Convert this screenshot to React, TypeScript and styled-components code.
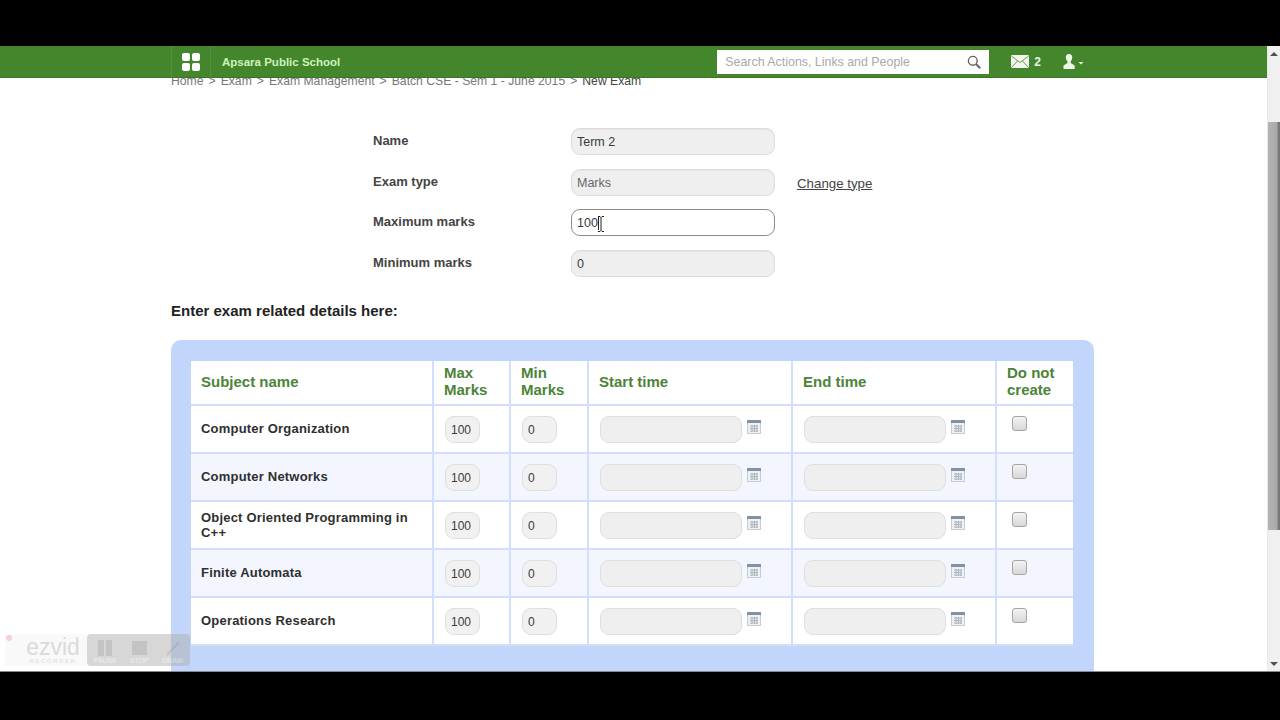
import React from 'react';
import styled, { createGlobalStyle } from 'styled-components';

const GlobalStyle = createGlobalStyle`
  html, body {
    margin: 0;
    padding: 0;
    height: 720px;
    overflow: hidden;
    background: #000;
    font-family: "Liberation Sans", Arial, sans-serif;
  }
`;

const Screen = styled.div`
  width: 1280px;
  height: 720px;
  padding: 46px 0 48px;
  box-sizing: border-box;
  background: #000;
`;

const Viewport = styled.div`
  position: relative;
  display: flex;
  height: 100%;
  background: #fff;
  overflow: hidden;
  border-bottom: 1px solid #888;
  box-sizing: border-box;
`;

const Page = styled.div`
  flex: 1;
  min-width: 0;
  display: flex;
  flex-direction: column;
`;

const Header = styled.header`
  position: relative;
  z-index: 2;
  flex: none;
  height: 32px;
  display: flex;
  align-items: center;
  padding-left: 171px;
  background: #44862b;
  border-bottom: 1px solid #3a7425;
  box-sizing: border-box;
`;

const AppsButton = styled.div`
  width: 40px;
  height: 32px;
  display: flex;
  align-items: center;
  justify-content: center;
  border-left: 1px solid #50933a;
  border-right: 1px solid #50933a;
  box-sizing: border-box;
`;

const SchoolName = styled.div`
  margin-left: 11px;
  font-size: 11.5px;
  font-weight: 700;
  color: #cdf2bd;
`;

const HeaderRight = styled.div`
  margin-left: auto;
  display: flex;
  align-items: center;
  padding-right: 183px;
`;

const SearchBox = styled.div`
  width: 272px;
  height: 24px;
  display: flex;
  align-items: center;
  justify-content: space-between;
  padding: 0 8px;
  box-sizing: border-box;
  background: #fff;
  font-size: 12.4px;
  color: #aaa7ad;
`;

const MailGroup = styled.div`
  display: flex;
  align-items: center;
  gap: 5px;
  margin-left: 22px;
  font-size: 12px;
  font-weight: 700;
  color: #e8f5e0;
`;

const UserGroup = styled.div`
  display: flex;
  align-items: center;
  margin-left: 21px;
`;

const Breadcrumb = styled.nav`
  flex: none;
  display: flex;
  gap: 5px;
  margin-top: -4px;
  padding-left: 171px;
  height: 14px;
  line-height: 14px;
  font-size: 12.2px;
  color: #777;
`;

const CurrentCrumb = styled.span`
  color: #444;
`;

const ExamForm = styled.div`
  display: grid;
  grid-template-columns: 198px 204px auto;
  grid-auto-rows: 27px;
  row-gap: 13.5px;
  align-items: center;
  margin: 40px 0 0 373px;
`;

const FieldLabel = styled.label`
  margin-top: -2px;
  font-size: 13px;
  font-weight: 700;
  color: #444;
`;

const TextField = styled.div<{ $active?: boolean; $muted?: boolean }>`
  height: 27px;
  display: flex;
  align-items: center;
  padding: 1px 5px 0;
  box-sizing: border-box;
  border-radius: 9px;
  border: 1px solid ${p => (p.$active ? '#8d8d85' : '#dddddd')};
  background: ${p => (p.$active ? '#fff' : '#efefef')};
  box-shadow: ${p => (p.$active ? 'none' : 'inset 0 1px 1px #e4e4e4')};
  font-size: 12.5px;
  color: ${p => (p.$muted ? '#666' : '#3a3a3a')};
`;

const Caret = styled.span`
  width: 1px;
  height: 14px;
  background: #222;
`;

const ChangeLink = styled.a`
  margin: 2px 0 0 22px;
  font-size: 13.3px;
  color: #444;
  text-decoration: underline;
`;

const SectionTitle = styled.h3`
  margin: 25px 0 21px 171px;
  height: 17px;
  line-height: 17px;
  font-size: 15px;
  font-weight: 700;
  color: #222;
`;

const TablePanel = styled.div`
  flex: none;
  width: 923px;
  height: 400px;
  margin-left: 171px;
  padding: 21px 20px;
  box-sizing: border-box;
  background: #c2d5fb;
  border-radius: 10px 10px 0 0;
`;

const ExamTable = styled.table`
  width: 882px;
  table-layout: fixed;
  border-collapse: collapse;
  background: #fff;
`;

const Col = styled.col<{ $w: number }>`
  width: ${p => p.$w}px;
`;

const HeadCell = styled.th`
  height: 44px;
  padding: 0 10px 2px;
  box-sizing: border-box;
  text-align: left;
  vertical-align: middle;
  font-size: 15px;
  line-height: 17px;
  font-weight: 700;
  color: #4c8437;
  border-left: 2px solid #d3dffa;
  border-bottom: 2px solid #d3dffa;

  &:first-child {
    border-left: 0;
  }
`;

const Row = styled.tr<{ $alt?: boolean }>`
  background: ${p => (p.$alt ? '#f3f6fe' : '#fff')};
`;

const Cell = styled.td`
  height: 48px;
  padding: 0 10px 0 11px;
  box-sizing: border-box;
  vertical-align: middle;
  border-left: 2px solid #d3dffa;
  border-bottom: 2px solid #d3dffa;

  &:first-child {
    border-left: 0;
    padding-left: 10px;
  }
`;

const SubjectName = styled.div`
  font-size: 13px;
  line-height: 15px;
  font-weight: 700;
  color: #2f2f2f;
  letter-spacing: 0.2px;
`;

const SmallField = styled.div`
  width: 35px;
  height: 27px;
  margin-top: 2px;
  display: flex;
  align-items: center;
  padding-left: 5px;
  box-sizing: border-box;
  border: 1px solid #dedede;
  border-radius: 9px;
  background: #f1f1f1;
  font-size: 12px;
  color: #3a3a3a;
`;

const TimeWrap = styled.div`
  display: flex;
  align-items: center;
  gap: 5px;
  margin-top: 2px;
`;

const TimeField = styled.div`
  width: 142px;
  height: 27px;
  box-sizing: border-box;
  border: 1px solid #dedede;
  border-radius: 9px;
  background: #efefef;
`;

const CalendarSvg = styled.svg`
  flex: none;
  margin-top: -6px;
`;

const CheckCell = styled(Cell)`
  vertical-align: top;
  padding-top: 10px;
`;

const CheckBox = styled.div`
  width: 15px;
  height: 15px;
  margin-left: 4px;
  box-sizing: border-box;
  border: 1px solid #a4a4a4;
  border-radius: 3px;
  background: linear-gradient(#f2f2f2, #d8d8d8);
`;

const Scrollbar = styled.div`
  flex: none;
  width: 13px;
  display: flex;
  flex-direction: column;
  align-items: center;
  background: #f0f0f0;
  border-left: 1px solid #e8e8e8;
  box-sizing: border-box;
`;

const ScrollArrow = styled.div<{ $down?: boolean }>`
  flex: none;
  width: 0;
  height: 0;
  margin: ${p => (p.$down ? 'auto 0 5px' : '6px 0 0')};
  border-left: 4px solid transparent;
  border-right: 4px solid transparent;
  ${p => (p.$down ? 'border-top: 4px solid #505050;' : 'border-bottom: 4px solid #505050;')}
`;

const ScrollThumb = styled.div`
  flex: none;
  width: 100%;
  height: 408px;
  margin-top: 66px;
  background: linear-gradient(90deg, #b4b4b4 0%, #a8a8a8 75%, #777 85%, #777 100%);
  box-sizing: border-box;
`;

const IBeam = styled.svg`
  position: absolute;
  left: 597px;
  top: 170px;
  z-index: 3;
`;

const Recorder = styled.div`
  position: absolute;
  left: 5px;
  top: 588px;
  z-index: 3;
  width: 185px;
  height: 32px;
  display: flex;
  opacity: 0.62;
`;

const RecorderLogo = styled.div`
  position: relative;
  width: 82px;
  display: flex;
  flex-direction: column;
  align-items: center;
  background: rgba(238, 238, 238, 0.55);
  color: #c4c4c4;
  font-size: 23px;
  line-height: 20px;
  padding: 3px 0 0 14px;
  box-sizing: border-box;
`;

const RecorderDot = styled.span`
  position: absolute;
  left: 1px;
  top: 1px;
  width: 6px;
  height: 6px;
  border-radius: 50%;
  background: #f4b8b8;
`;

const RecorderSub = styled.span`
  font-size: 6px;
  line-height: 8px;
  letter-spacing: 1.6px;
`;

const RecorderControls = styled.div`
  flex: 1;
  display: flex;
  justify-content: space-around;
  background: rgba(175, 175, 175, 0.8);
  border-radius: 4px;
`;

const RecorderControl = styled.div`
  display: flex;
  flex-direction: column;
  align-items: center;
  justify-content: flex-end;
  gap: 1px;
  padding-bottom: 2px;
  font-size: 7px;
  color: #e6e6e6;
`;

const CalendarIcon = () => (
  <CalendarSvg width="14" height="14" viewBox="0 0 14 14">
    <rect x="0.5" y="0.5" width="13" height="13" fill="#edf1f6" stroke="#c5ccd4" />
    <rect x="0" y="0" width="14" height="3" fill="#7f93a8" />
    <path d="M3 6h8M3 8.500h8M3 11h8M5 5v7M7.500 5v7M10 5v7" stroke="#a2a6aa" strokeWidth="0.8" fill="none" />
  </CalendarSvg>
);

const subjects = [
  'Computer Organization',
  'Computer Networks',
  'Object Oriented Programming in C++',
  'Finite Automata',
  'Operations Research',
];

export default function App() {
  return (
    <Screen>
      <GlobalStyle />
      <Viewport>
        <Page>
          <Header>
            <AppsButton>
              <svg width="18" height="18" viewBox="0 0 18 18" fill="#fff">
                <rect x="0" y="0" width="8" height="8" rx="2" />
                <rect x="10" y="0" width="8" height="8" rx="2" />
                <rect x="0" y="10" width="8" height="8" rx="2" />
                <rect x="10" y="10" width="8" height="8" rx="2" />
              </svg>
            </AppsButton>
            <SchoolName>Apsara Public School</SchoolName>
            <HeaderRight>
              <SearchBox>
                Search Actions, Links and People
                <svg width="14" height="14" viewBox="0 0 14 14" fill="none" stroke="#666" strokeWidth="1.4">
                  <circle cx="5.800" cy="5.800" r="4.400" />
                  <path d="M9 9l4.200 4.200" strokeWidth="2" />
                </svg>
              </SearchBox>
              <MailGroup>
                <svg width="18" height="13" viewBox="0 0 18 13">
                  <rect width="18" height="13" rx="1" fill="#f2f6ee" />
                  <path d="M0.500 1L9 7.500 17.500 1M0.500 12.500L6.500 6M17.500 12.500L11.500 6" fill="none" stroke="#6d9a58" strokeWidth="1" />
                </svg>
                2
              </MailGroup>
              <UserGroup>
                <svg width="22" height="15" viewBox="0 0 22 15" fill="#eef6e8">
                  <path d="M7 0c2.500 0 3.500 1.800 3.200 4-.2 1.500-.9 2.700-1.500 3.400V9l4 2.500V15H1.500v-3.500l4-2.500V7.400C4.800 6.700 4 5.500 3.800 4 3.500 1.800 4.500 0 7 0z" />
                  <path d="M16.500 8h5L19 10.500z" />
                </svg>
              </UserGroup>
            </HeaderRight>
          </Header>
          <Breadcrumb>
            <span>Home</span><span>&gt;</span>
            <span>Exam</span><span>&gt;</span>
            <span>Exam Management</span><span>&gt;</span>
            <span>Batch CSE - Sem 1 - June 2015</span><span>&gt;</span>
            <CurrentCrumb>New Exam</CurrentCrumb>
          </Breadcrumb>

          <ExamForm>
            <FieldLabel>Name</FieldLabel>
            <TextField>Term 2</TextField>
            <span />
            <FieldLabel>Exam type</FieldLabel>
            <TextField $muted>Marks</TextField>
            <ChangeLink>Change type</ChangeLink>
            <FieldLabel>Maximum marks</FieldLabel>
            <TextField $active>100<Caret /></TextField>
            <span />
            <FieldLabel>Minimum marks</FieldLabel>
            <TextField>0</TextField>
            <span />
          </ExamForm>

          <SectionTitle>Enter exam related details here:</SectionTitle>

          <TablePanel>
            <ExamTable>
              <colgroup>
                <Col $w={242} />
                <Col $w={77} />
                <Col $w={78} />
                <Col $w={204} />
                <Col $w={204} />
                <Col $w={77} />
              </colgroup>
              <thead>
                <tr>
                  <HeadCell>Subject name</HeadCell>
                  <HeadCell>Max<br />Marks</HeadCell>
                  <HeadCell>Min<br />Marks</HeadCell>
                  <HeadCell>Start time</HeadCell>
                  <HeadCell>End time</HeadCell>
                  <HeadCell>Do not<br />create</HeadCell>
                </tr>
              </thead>
              <tbody>
                {subjects.map((name, i) => (
                  <Row key={name} $alt={i % 2 === 1}>
                    <Cell><SubjectName>{name}</SubjectName></Cell>
                    <Cell><SmallField>100</SmallField></Cell>
                    <Cell><SmallField>0</SmallField></Cell>
                    <Cell><TimeWrap><TimeField /><CalendarIcon /></TimeWrap></Cell>
                    <Cell><TimeWrap><TimeField /><CalendarIcon /></TimeWrap></Cell>
                    <CheckCell><CheckBox /></CheckCell>
                  </Row>
                ))}
              </tbody>
            </ExamTable>
          </TablePanel>
        </Page>

        <Scrollbar>
          <ScrollArrow />
          <ScrollThumb />
          <ScrollArrow $down />
        </Scrollbar>

        <IBeam width="8" height="16" viewBox="0 0 8 16" fill="none" stroke="#222" strokeWidth="1">
          <path d="M1 .5h2l1 1 1-1h2M4 1.500v13M1 15.500h2l1-1 1 1h2" />
        </IBeam>

        <Recorder>
          <RecorderLogo>
            <RecorderDot />
            ezvid
            <RecorderSub>RECORDER</RecorderSub>
          </RecorderLogo>
          <RecorderControls>
            <RecorderControl>
              <svg width="16" height="16" viewBox="0 0 16 16" fill="#a0a0a0">
                <rect x="1" y="0" width="6" height="16" />
                <rect x="9" y="0" width="6" height="16" />
              </svg>
              PAUSE
            </RecorderControl>
            <RecorderControl>
              <svg width="16" height="16" viewBox="0 0 16 16" fill="#a0a0a0">
                <rect x="0" y="1" width="15" height="14" />
              </svg>
              STOP
            </RecorderControl>
            <RecorderControl>
              <svg width="16" height="16" viewBox="0 0 16 16" fill="none" stroke="#a0a0a0" strokeWidth="2">
                <path d="M2 15L14 2" />
              </svg>
              DRAW
            </RecorderControl>
          </RecorderControls>
        </Recorder>
      </Viewport>
    </Screen>
  );
}
